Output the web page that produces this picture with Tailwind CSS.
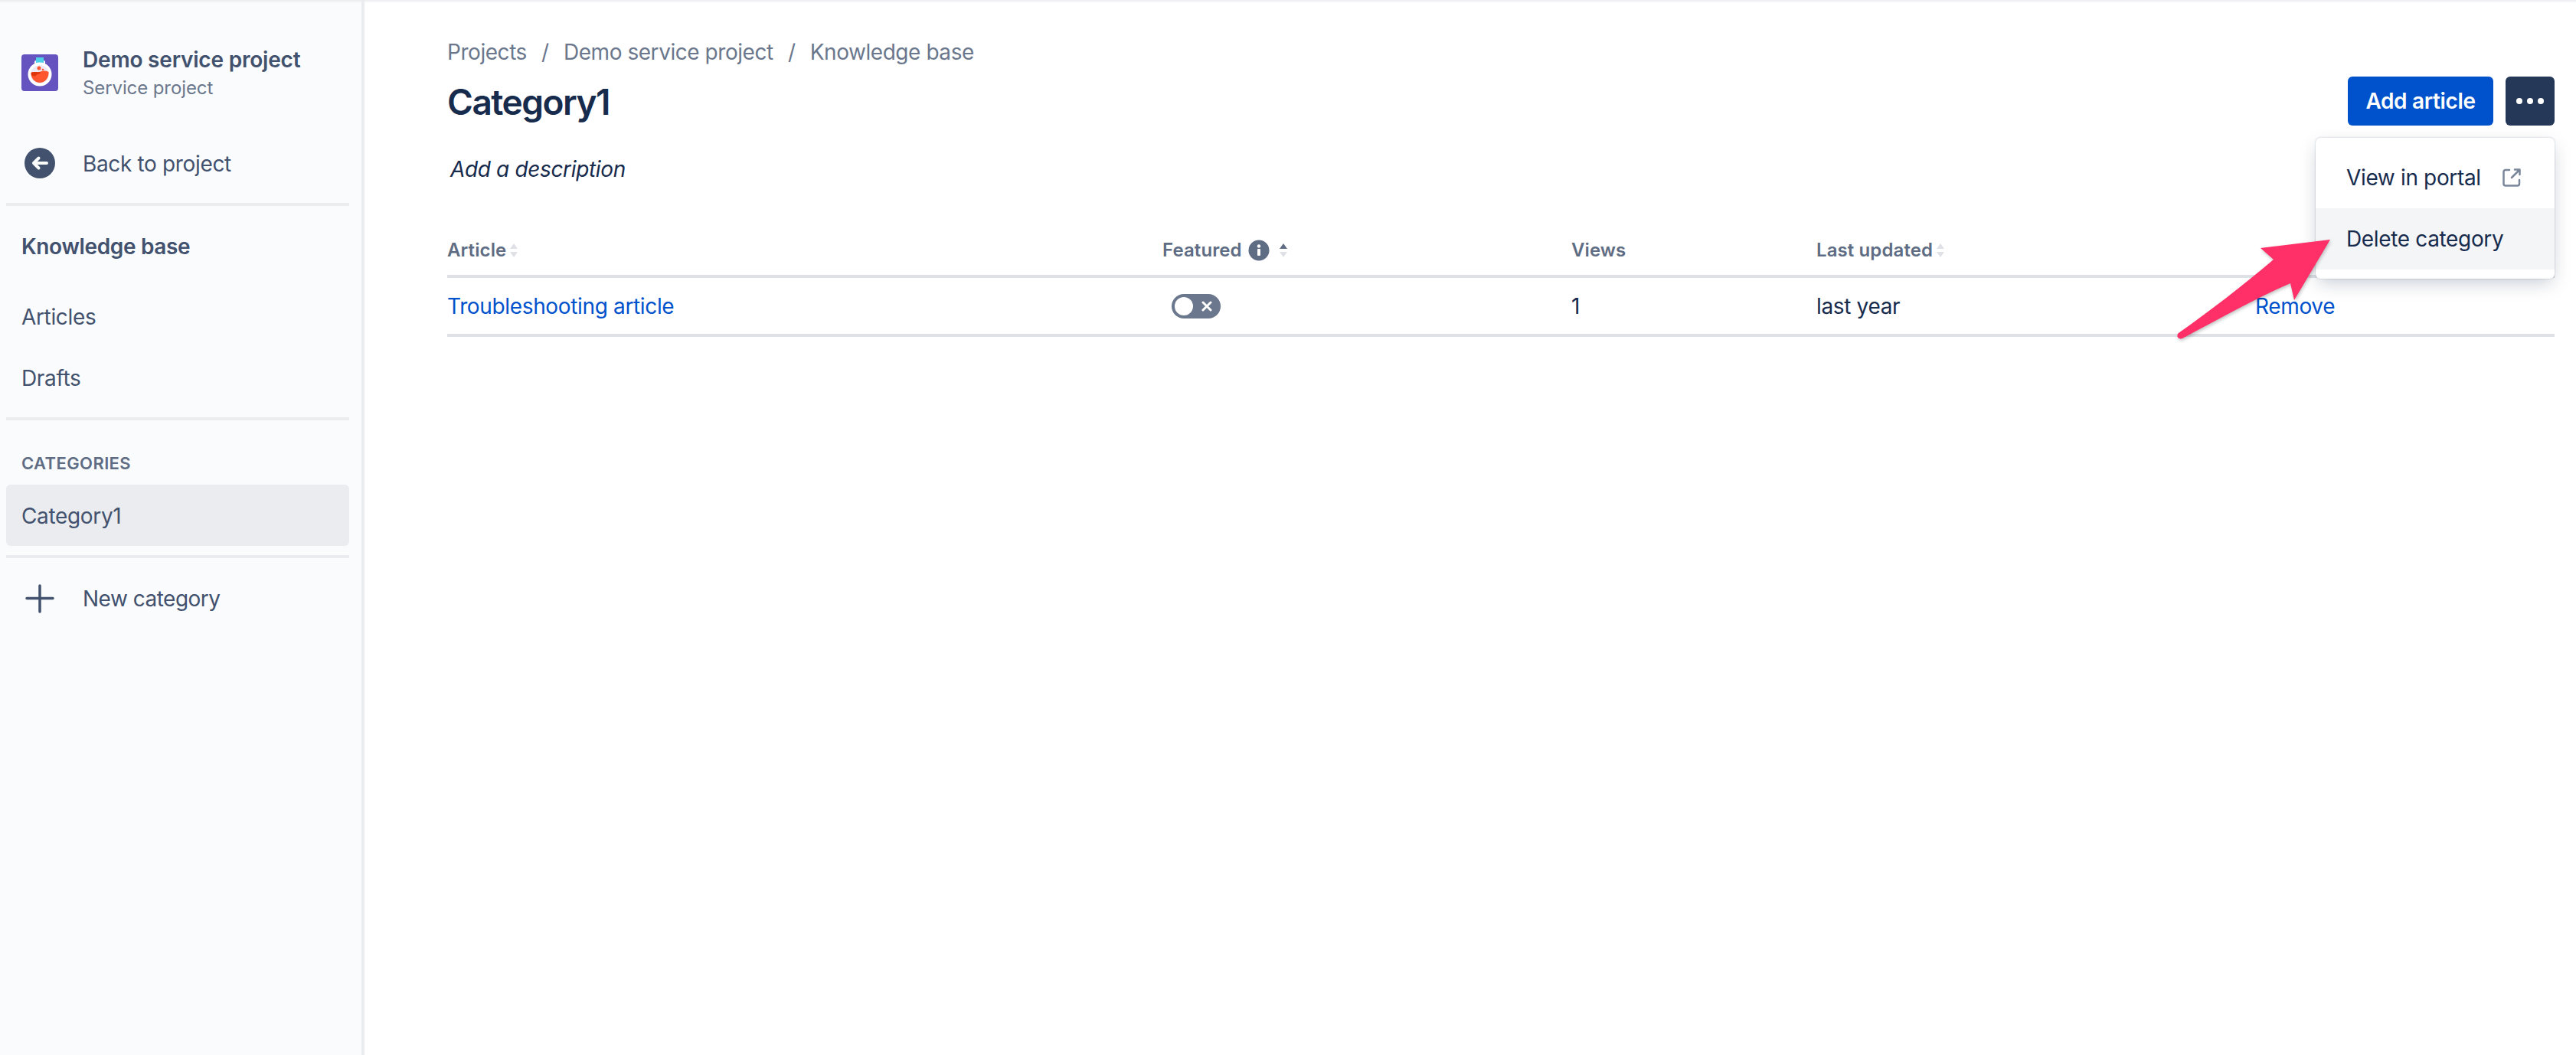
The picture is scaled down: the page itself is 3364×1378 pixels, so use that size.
<!DOCTYPE html>
<html lang="en">
<head>
  <meta charset="UTF-8">
  <title>Category1 - Knowledge base</title>
  <script src="https://cdn.jsdelivr.net/npm/@tailwindcss/browser@4"></script>
</head>
<body class="bg-white h-[1378px] w-[3364px] overflow-hidden relative flex font-['Inter',sans-serif] text-[28px] tracking-[-0.35px] text-[#172B4D]">
  <div class="absolute top-0 left-0 w-full h-1 bg-linear-to-b from-[#EBECF0] to-transparent"></div>
  <!-- sidebar -->
  <aside class="w-[476px] h-full shrink-0 bg-[#FAFBFC] border-r-4 border-[#EBECF0] pl-2 pr-4 flex flex-col">
    <div class="h-[152px] pt-[62px] flex">
      <svg class="w-12 h-12 ml-5 mt-[9px] shrink-0" viewBox="0 0 48 48">
        <rect width="48" height="48" rx="4" fill="#6554C0"/>
        <rect x="17" y="8" width="14" height="10" rx="2" fill="#fff"/>
        <rect x="19" y="4" width="10" height="7" fill="#4ED0E8"/>
        <circle cx="24" cy="26" r="15.5" fill="#fff"/>
        <circle cx="24" cy="26" r="12" fill="#EDEAF6"/>
        <path d="M12.500 24c4-2 8 0 11-1 3-1 6-3 12 0 .6 8-5 14-11.500 14S12 31 12.500 24z" fill="#FF5630"/>
        <path d="M12.500 24c4-2 8 0 11-1l2 1c-3 2-6 2-7 4-2 1-5 0-5.500-1z" fill="#DE350B"/>
        <circle cx="23" cy="18" r="2.500" fill="#FF5630"/>
        <circle cx="28" cy="20" r="1.300" fill="#FF5630"/>
      </svg>
      <div class="ml-8">
        <div class="font-semibold tracking-[-0.2px] text-[#42526E] leading-8">Demo service project</div>
        <div class="text-2xl tracking-[-0.1px] text-[#6B778C] leading-[30px] mt-[6px]">Service project</div>
      </div>
    </div>
    <div class="h-[117px] border-b-4 border-[#EBECF0] flex items-center pt-[9px] text-[#42526E]">
      <svg class="w-10 h-10 ml-6 shrink-0" viewBox="0 0 40 40">
        <circle cx="20" cy="20" r="20" fill="#42526E"/>
        <path d="M29 20H12M18.500 13.500L12 20l6.500 6.500" fill="none" stroke="#FAFBFC" stroke-width="4" stroke-linecap="round" stroke-linejoin="round"/>
      </svg>
      <span class="ml-9 mt-[2px]">Back to project</span>
    </div>
    <div class="h-[280px] border-b-4 border-[#EBECF0] text-[#42526E] pl-5">
      <div class="font-semibold pt-[35px] leading-[36px]">Knowledge base</div>
      <div class="mt-[56px] leading-[36px]">Articles</div>
      <div class="mt-[44px] leading-[36px]">Drafts</div>
    </div>
    <div class="text-[22px] font-semibold text-[#5E6C84] pl-5 pt-[42px] leading-[28px] tracking-[0.4px] h-[84px]">CATEGORIES</div>
    <div class="h-20 rounded-md bg-[#EBECF0] text-[#42526E] pl-5 pt-[2px] flex items-center">Category1</div>
    <div class="h-1 bg-[#EBECF0] mt-3"></div>
    <div class="h-[106px] flex items-center text-[#42526E]">
      <svg class="w-10 h-10 ml-6 shrink-0" viewBox="0 0 40 40">
        <path d="M20 3v34M3 19.500h34" fill="none" stroke="#42526E" stroke-width="3.500" stroke-linecap="round"/>
      </svg>
      <span class="ml-9 tracking-[-0.5px]">New category</span>
    </div>
  </aside>

  <!-- main -->
  <main class="flex-1 pl-[108px] pr-7 min-w-0">
    <nav class="flex items-center text-[#6B778C] tracking-[-0.45px] h-9 mt-[50px] leading-9">
      <span>Projects</span><span class="w-[48px] text-center">/</span><span>Demo service project</span><span class="w-[48px] text-center">/</span><span>Knowledge base</span>
    </nav>
    <div class="flex justify-between items-start mt-[14px]">
      <h1 class="text-[46px] font-semibold leading-[56px] tracking-[-1.5px] mt-[5px]">Category1</h1>
      <div class="flex gap-4">
        <button class="h-16 w-[190px] rounded-md bg-[#0052CC] text-white font-semibold">Add article</button>
        <button class="h-16 w-16 rounded-md bg-[#253858] flex items-center justify-center gap-[6px]">
          <span class="w-2 h-2 rounded-full bg-white"></span><span class="w-2 h-2 rounded-full bg-white"></span><span class="w-2 h-2 rounded-full bg-white"></span>
        </button>
      </div>
    </div>
    <div class="italic mt-[39px] ml-1 leading-9">Add a description</div>

    <div class="grid grid-cols-[934px_534px_320px_573px_1fr] mt-[64px]">
      <div class="col-span-5 grid grid-cols-subgrid h-[60px] items-center pb-[8px] border-b-4 border-[#DFE1E6] text-2xl tracking-[0.1px] font-semibold text-[#5E6C84]">
        <div class="flex items-center">Article
          <svg class="w-3 h-5 ml-1" viewBox="0 0 12 20"><path d="M6 1l5 7H1zM6 19l5-7H1z" fill="#DFE1E6"/></svg>
        </div>
        <div class="flex items-center">Featured
          <svg class="w-7 h-7 ml-2" viewBox="0 0 28 28"><circle cx="14" cy="14" r="13.500" fill="#5E6C84"/><rect x="12" y="12" width="4" height="9" rx="1" fill="#fff"/><circle cx="14" cy="8.500" r="2.200" fill="#fff"/></svg>
          <svg class="w-3 h-5 ml-3" viewBox="0 0 12 20"><path d="M6 1l5 7H1z" fill="#5E6C84"/><path d="M6 19l5-7H1z" fill="#DFE1E6"/></svg>
        </div>
        <div>Views</div>
        <div class="flex items-center">Last updated
          <svg class="w-3 h-5 ml-1" viewBox="0 0 12 20"><path d="M6 1l5 7H1zM6 19l5-7H1z" fill="#DFE1E6"/></svg>
        </div>
        <div></div>
      </div>
      <div class="col-span-5 grid grid-cols-subgrid h-[77px] items-center border-b-4 border-[#DFE1E6]">
        <div class="text-[#0052CC]">Troubleshooting article</div>
        <div>
          <div class="ml-3 w-16 h-8 rounded-full bg-[#6B778C] relative">
            <span class="absolute left-1 top-1 w-6 h-6 rounded-full bg-white"></span>
            <svg class="absolute right-[11px] top-[9px] w-[14px] h-[14px]" viewBox="0 0 14 14"><path d="M2 2l10 10M12 2L2 12" stroke="#fff" stroke-width="3" stroke-linecap="round"/></svg>
          </div>
        </div>
        <div>1</div>
        <div>last year</div>
        <div class="text-[#0052CC]">Remove</div>
      </div>
    </div>
  </main>

  <!-- dropdown menu -->
  <div class="absolute left-[3024px] top-[180px] w-[312px] h-[184px] bg-white rounded-md py-2 shadow-[0_8px_24px_-4px_rgba(9,30,66,0.25),0_0_2px_rgba(9,30,66,0.31)]">
    <div class="h-[84px] pt-1 pl-10 pr-[44px] flex items-center justify-between">
      <span>View in portal</span>
      <svg class="w-6 h-6" viewBox="0 0 24 24" fill="none" stroke="#7A869A" stroke-width="2.500" stroke-linecap="round" stroke-linejoin="round">
        <path d="M9 2H4a2.500 2.500 0 0 0-2.500 2.500v15.500A2.500 2.500 0 0 0 4 22.500h15.500A2.500 2.500 0 0 0 22 20v-5"/>
        <path d="M16 1.500h6.500V8M22 2L12 12"/>
      </svg>
    </div>
    <div class="h-20 pl-10 flex items-center bg-[#F4F5F7]">Delete category</div>
  </div>

  <!-- annotation arrow -->
  <svg class="absolute left-[2830px] top-[300px] w-[230px] h-[160px] drop-shadow-[1px_2px_2px_rgba(0,0,0,0.25)]" viewBox="2830 300 230 160">
    <path d="M3043 313L2952 324 2969 339C2930 372 2885 407 2845 435 2841 439 2845 444 2850 442 2895 418 2945 390 2991 370L2996 392z" fill="#FF3068"/>
  </svg>
</body>
</html>
